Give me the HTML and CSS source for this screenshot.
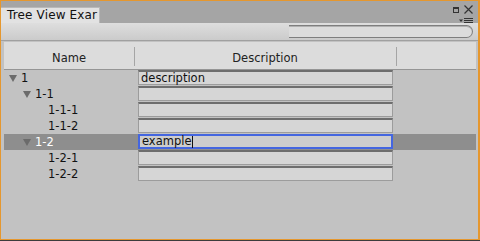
FILE: index.html
```html
<!DOCTYPE html>
<html lang="en">
  <head>
    <meta charset="UTF-8" />
    <title>Tree View Example</title>
    <link rel="stylesheet" href="styles.css">
  </head>
  <body>
    <div class="window">
      <div class="tabbar">
        <div class="tab"><span class="tab-label">Tree View Exar</span></div>
        <div class="controls">
          <div class="top-icons">
            <span class="max"></span>
            <svg class="close" width="9" height="9" viewBox="0 0 9 9"><path d="M0.5 0.5L8.5 8.5M8.5 0.5L0.5 8.5" stroke="#333" stroke-width="1.2"/></svg>
          </div>
          <div class="menu-icon">
            <svg width="14" height="6" viewBox="0 0 14 6"><path d="M0 1.5h4l-2 2.5z" fill="#333"/><path d="M5 0.5h9M5 2.5h9M5 4.5h9" stroke="#333" stroke-width="1"/></svg>
          </div>
        </div>
      </div>

      <div class="toolbar">
        <div class="search"></div>
      </div>

      <div class="tree">
        <div class="header">
          <div class="col name">Name</div>
          <div class="col desc">Description</div>
          <div class="col rest"></div>
        </div>

        <div class="row">
          <div class="cell name lvl0"><span class="arrow"></span>1</div>
          <div class="cell desc"><div class="field">description</div></div>
        </div>
        <div class="row">
          <div class="cell name lvl1"><span class="arrow"></span>1-1</div>
          <div class="cell desc"><div class="field"></div></div>
        </div>
        <div class="row">
          <div class="cell name lvl2">1-1-1</div>
          <div class="cell desc"><div class="field"></div></div>
        </div>
        <div class="row">
          <div class="cell name lvl2">1-1-2</div>
          <div class="cell desc"><div class="field"></div></div>
        </div>
        <div class="row selected">
          <div class="cell name lvl1"><span class="arrow"></span>1-2</div>
          <div class="cell desc"><div class="field focus">example<span class="caret"></span></div></div>
        </div>
        <div class="row">
          <div class="cell name lvl2">1-2-1</div>
          <div class="cell desc"><div class="field"></div></div>
        </div>
        <div class="row">
          <div class="cell name lvl2">1-2-2</div>
          <div class="cell desc"><div class="field"></div></div>
        </div>
      </div>
    </div>
    <div class="dock-edge"></div>
  </body>
</html>
```

FILE: styles.css
```css
* {
  margin: 0;
  padding: 0;
  box-sizing: border-box;
  font-family: "DejaVu Sans", sans-serif;
}
body {
  width: 480px;
  height: 241px;
  background: #3a3a3a;
  overflow: hidden;
}

/* WINDOW FRAME */
.window {
  width: 480px;
  height: 240px;
  border: 1px solid #e5972e;
  border-right-width: 2px;
  background: #c2c2c2;
  display: flex;
  flex-direction: column;
}
.dock-edge {
  height: 1px;
  background: #3c3c3c;
}

/* TAB BAR */
.tabbar {
  height: 22px;
  background: #a5a5a5;
  display: flex;
  justify-content: space-between;
}
.tab {
  margin-top: 6px;
  width: 99px;
  height: 16px;
  background: #e2e2e2;
  border: 1px solid #b9b9b9;
  border-bottom: none;
  border-left: none;
  padding-left: 6px;
  color: #111;
}
.tab-label {
  display: block;
  width: 92px;
  font-size: 12px;
  letter-spacing: 0.15px;
  line-height: 15px;
  white-space: nowrap;
}
.controls {
  width: 26px;
  margin-right: 5px;
  display: flex;
  flex-direction: column;
  align-items: flex-end;
}
.top-icons {
  margin-top: 4px;
  display: flex;
  align-items: center;
  gap: 5px;
}
.max {
  width: 6px;
  height: 6px;
  border: 1px solid #333;
  border-top-width: 2px;
}
.menu-icon {
  margin-top: 4px;
  height: 6px;
  line-height: 0;
}

/* TOOLBAR */
.toolbar {
  height: 18px;
  background: linear-gradient(#dedede, #cbcbcb);
  border-bottom: 1px solid #a0a0a0;
  display: flex;
  justify-content: flex-end;
  align-items: center;
  padding-right: 5px;
}
.search {
  width: 184px;
  height: 13px;
  background: #dcdcdc;
  border: 1px solid #7e7e7e;
  border-left: none;
  border-radius: 0 7px 7px 0;
  box-shadow: inset 0 1px 0 #b0b0b0;
}

/* TREE */
.tree {
  padding: 1px 2px 0 3px;
}
.header {
  height: 28px;
  background: #dcdcdc;
  border-bottom: 1px solid #959595;
  display: flex;
}
.col {
  font-size: 11.5px;
  color: #222;
  text-align: center;
  padding-top: 9px;
  position: relative;
}
.col.name {
  width: 130px;
}
.col.desc {
  width: 262px;
}
.col.rest {
  flex: 1;
}
.col.desc::before,
.col.rest::before {
  content: "";
  position: absolute;
  left: 0;
  top: 5px;
  height: 19px;
  width: 1px;
  background: #a5a5a5;
}

.row {
  height: 16px;
  display: flex;
  align-items: center;
}
.row.selected {
  background: #8e8e8e;
}
.cell.name {
  width: 130px;
  font-size: 11.5px;
  color: #111;
  display: flex;
  align-items: center;
  white-space: nowrap;
}
.row.selected .cell.name {
  color: #fff;
}
.lvl0 {
  padding-left: 5px;
}
.lvl1 {
  padding-left: 19px;
}
.lvl2 {
  padding-left: 44px;
}
.arrow {
  width: 0;
  height: 0;
  border-left: 4px solid transparent;
  border-right: 4px solid transparent;
  border-top: 7px solid #6b6b6b;
  margin-right: 4px;
}
.cell.desc {
  width: 262px;
  padding: 0 3px 0 4px;
  height: 16px;
}
.field {
  height: 15px;
  background: #d6d6d6;
  border: 1px solid #9c9c9c;
  border-top: 2px solid #6e6e6e;
  font-size: 11.5px;
  line-height: 12px;
  padding-left: 2px;
  color: #111;
}
.field.focus {
  border: 2px solid #4466e0;
  background: #cdcdcd;
  line-height: 11px;
}
.caret {
  display: inline-block;
  width: 1px;
  height: 12px;
  background: #111;
  vertical-align: top;
}
```
